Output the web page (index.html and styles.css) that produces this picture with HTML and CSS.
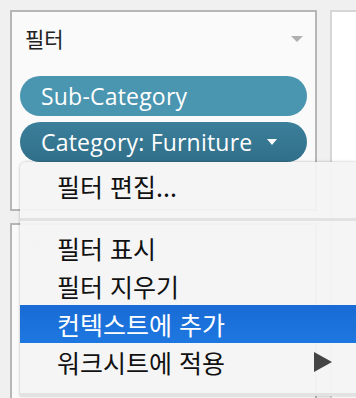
FILE: index.html
```html
<!DOCTYPE html>
<html lang="ko">
<head>
	<title>필터</title>
	<meta charset="utf-8">
	<link rel="stylesheet" href="styles.css">
</head>
<body>

<!-- wrap -->
<div class="workspace">

	<div class="sideCol">
		<div class="card filterCard">
			<div class="card-head">
				<span class="card-title">필터</span>
				<span class="caret caret-gray"></span>
			</div>
			<div class="pill pill-light">Sub-Category</div>
			<div class="pill pill-dark">Category: Furniture <span class="caret caret-white"></span></div>
		</div>

		<div class="card markCard">
			<div class="card-head">
				<span class="card-title">마크</span>
			</div>
			<div class="markSelect">
				<span class="markSelect-box"></span>
			</div>
			<div class="markTiles">
				<span class="markTile"></span>
				<span class="markTile"></span>
				<span class="markTile"></span>
			</div>
		</div>
	</div>

	<div class="sheet"></div>

</div>
<!-- //wrap -->

<!-- context menu -->
<ul class="ctxMenu">
	<li class="ctxMenu-item">필터 편집...</li>
	<li class="ctxMenu-sep"></li>
	<li class="ctxMenu-item">필터 표시</li>
	<li class="ctxMenu-item">필터 지우기</li>
	<li class="ctxMenu-item is-active">컨텍스트에 추가</li>
	<li class="ctxMenu-item has-sub">워크시트에 적용 <span class="ctxMenu-arrow"></span></li>
	<li class="ctxMenu-sep ctxMenu-sep-low"></li>
</ul>

</body>
</html>
```

FILE: styles.css
```css
*{padding: 0; margin: 0; border: 0; box-sizing: border-box;}
html, body {height: 100%; overflow: hidden;}
body {background: #f0f0f0; font-family: "Noto Sans CJK KR", "Noto Sans", sans-serif; color: #111;}

.workspace {display: flex; gap: 13px; padding: 10px 0 0 10px; height: 100%;}

.sideCol {display: flex; flex-direction: column; gap: 12px; width: 307px; flex: none;}

.card {background: #fafafa; border: 2px solid #b6b6b6; padding: 0 8px;}
.filterCard {height: 201px;}
.markCard {flex: 1; border-bottom: 0;}

.card-head {display: flex; align-items: center; justify-content: space-between; height: 52px; padding: 0 4px 0 5px; margin-bottom: 12px;}
.card-title {font-size: 21px; color: #222;}
.markCard .card-head {height: 44px; margin-bottom: 6px;}
.markCard .card-title {font-size: 17px; color: #e4e4e4;}

.caret {display: inline-block; width: 0; height: 0; border-left: 6px solid transparent; border-right: 6px solid transparent;}
.caret-gray {border-top: 6px solid #b0b0b0; margin-top: 2px;}
.caret-white {border-left-width: 5px; border-right-width: 5px; border-top: 6px solid #fff; margin-left: 15px; vertical-align: middle;}

.pill {display: flex; align-items: center; height: 40px; border-radius: 20px; padding: 0 21px; color: #fff; font-family: "Open Sans", "Lato", sans-serif; font-size: 23px; letter-spacing: 0.2px; white-space: nowrap;}
.pill + .pill {margin-top: 6px;}
.pill-light {background: #4a95af;}
.pill-dark {background: linear-gradient(#3b7f9a, #316f8a);}

.markSelect {height: 40px; padding: 0 8px;}
.markSelect-box {display: block; height: 36px; border: 1px solid #e6e6e6; background: #fdfdfd;}
.markTiles {display: flex; gap: 70px; padding: 40px 0 0 33px;}
.markTile {width: 26px; height: 22px; border: 1px solid #e4e4e4;}

.sheet {flex: 1; background: #fff; border-top: 2px solid #d6d6d6; border-left: 2px solid #d6d6d6;}

/* context menu */
.ctxMenu {position: absolute; left: 20px; top: 162px; width: 340px; padding-top: 5px; list-style: none; background: rgba(244, 244, 244, 0.95); border-radius: 6px 6px 0 0; box-shadow: 0 0 3px rgba(0, 0, 0, 0.28);}
.ctxMenu-item {display: flex; align-items: center; height: 38px; padding: 0 28px 0 37px; font-size: 25px; color: #111; white-space: nowrap;}
.ctxMenu-item.is-active {background: linear-gradient(#196bd5, #1e77e0); color: #fff;}
.ctxMenu-sep {height: 3px; margin: 13px 0 8px; background: #e2e2e2;}
.ctxMenu-sep-low {margin: 12px 0 0;}
.ctxMenu-arrow {margin-left: auto; width: 0; height: 0; border-top: 10px solid transparent; border-bottom: 10px solid transparent; border-left: 18px solid #454545;}
```
